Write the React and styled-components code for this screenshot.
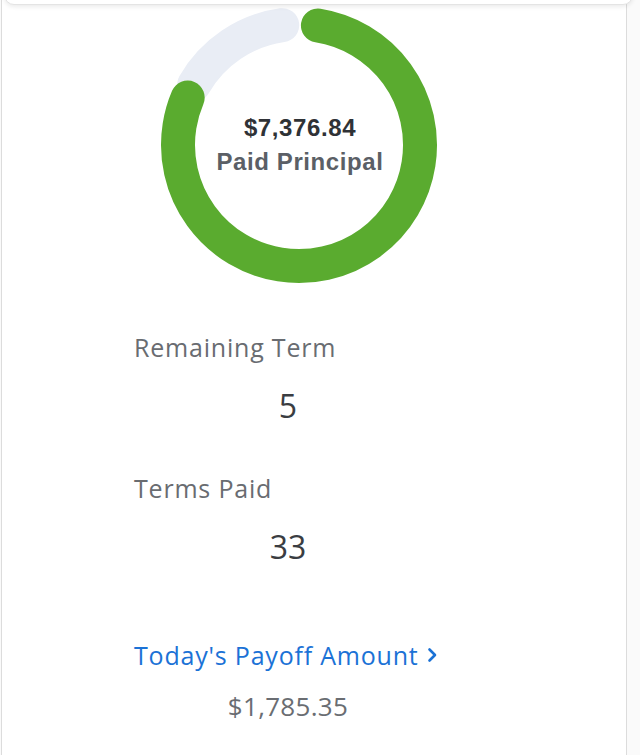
import React from 'react';
import styled, { createGlobalStyle } from 'styled-components';

const GlobalStyle = createGlobalStyle`
  * { box-sizing: border-box; }
  body {
    margin: 0;
    background: #fafafa;
    font-family: "Open Sans", "Liberation Sans", sans-serif;
    overflow: hidden;
  }
`;

const Panel = styled.div`
  display: flow-root;
  margin-left: 1px;
  width: 626px;
  min-height: 100vh;
  background: #ffffff;
  border-left: 1px solid #dcdcdc;
  border-right: 1px solid #dcdcdc;
`;

const TopCard = styled.div`
  position: relative;
  z-index: 2;
  height: 40px;
  margin: -35px -7px 0 2px;
  background: #ffffff;
  border: 1px solid #e4e4e4;
  border-radius: 10px;
  box-shadow: 0 2px 4px rgba(0, 0, 0, 0.08);
`;

const Content = styled.div`
  padding-left: 132px;
  display: flex;
  flex-direction: column;
`;

const RingWrap = styled.div`
  display: grid;
  width: 280px;
  height: 280px;
  margin-left: 25px;

  & > * {
    grid-area: 1 / 1;
  }
`;

const RingText = styled.div`
  align-self: center;
  justify-self: center;
  text-align: center;
  font-family: "Liberation Sans", Arial, sans-serif;
  font-weight: 700;
  font-size: 24px;
  line-height: 34px;
  letter-spacing: 0.6px;
  margin-left: 2px;
`;

const Amount = styled.div`
  color: #2f3236;
`;

const Caption = styled.div`
  color: #5b5f66;
`;

const Block = styled.div`
  width: 308px;
  display: flex;
  flex-direction: column;
  margin-top: ${p => p.$top}px;
`;

const Label = styled.div`
  font-size: 25px;
  line-height: 32px;
  letter-spacing: 0.8px;
  color: #696c71;
`;

const Value = styled.div`
  text-align: center;
  font-size: 32px;
  line-height: 40px;
  color: #3a3d42;
  margin-top: 23px;
`;

const PayoffLink = styled.a`
  display: flex;
  align-items: center;
  gap: 8px;
  font-size: 25px;
  line-height: 32px;
  letter-spacing: 0.8px;
  color: #1b72d6;
  text-decoration: none;
  cursor: pointer;
`;

const Payoff = styled.div`
  text-align: center;
  font-size: 26px;
  line-height: 34px;
  letter-spacing: 0.3px;
  color: #6a6d72;
  margin-top: 18px;
`;

const R = 121;
const C = 2 * Math.PI * R;

const Arc = ({ from, to, color }) => {
  const len = ((to - from) / 360) * C;
  return (
    <circle
      cx="140"
      cy="140"
      r={R}
      fill="none"
      stroke={color}
      strokeWidth="34"
      strokeLinecap="round"
      strokeDasharray={`${len} ${C}`}
      transform={`rotate(${from - 90} 140 140)`}
    />
  );
};

const Chevron = () => (
  <svg width="10" height="16" viewBox="0 0 10 16">
    <path d="M2.5 2.5 L8 8 L2.5 13.5" fill="none" stroke="#1b72d6" strokeWidth="2.6" strokeLinecap="round" strokeLinejoin="round" />
  </svg>
);

const App = () => (
  <Panel>
    <GlobalStyle />
    <TopCard />
    <Content>
      <RingWrap>
        <svg width="280" height="280" viewBox="0 0 280 280">
          <Arc from={300} to={352} color="#e9edf5" />
          <Arc from={9} to={293} color="#5aab2f" />
        </svg>
        <RingText>
          <Amount>$7,376.84</Amount>
          <Caption>Paid Principal</Caption>
        </RingText>
      </RingWrap>

      <Block $top={46}>
        <Label>Remaining Term</Label>
        <Value>5</Value>
      </Block>

      <Block $top={46}>
        <Label>Terms Paid</Label>
        <Value>33</Value>
      </Block>

      <Block $top={72}>
        <PayoffLink>
          Today's Payoff Amount
          <Chevron />
        </PayoffLink>
        <Payoff>$1,785.35</Payoff>
      </Block>
    </Content>
  </Panel>
);

export default App;
